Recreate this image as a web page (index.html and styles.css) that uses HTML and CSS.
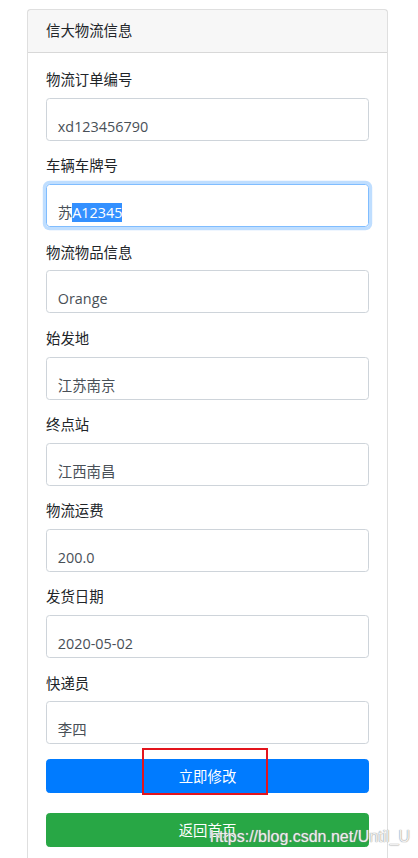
FILE: index.html
```html
<!DOCTYPE html>
<html lang="zh">
<head>
<meta charset="utf-8">
<title>信大物流信息</title>
<link rel="stylesheet" href="styles.css">
</head>
<body>
<div class="card">
  <div class="card-header">信大物流信息</div>
  <div class="card-body">
    <div class="form-group">
      <label class="label">物流订单编号</label>
      <div class="input">xd123456790</div>
    </div>
    <div class="form-group">
      <label class="label">车辆车牌号</label>
      <div class="input focused">苏<span class="sel">A12345</span></div>
    </div>
    <div class="form-group">
      <label class="label">物流物品信息</label>
      <div class="input">Orange</div>
    </div>
    <div class="form-group">
      <label class="label">始发地</label>
      <div class="input">江苏南京</div>
    </div>
    <div class="form-group">
      <label class="label">终点站</label>
      <div class="input">江西南昌</div>
    </div>
    <div class="form-group">
      <label class="label">物流运费</label>
      <div class="input">200.0</div>
    </div>
    <div class="form-group">
      <label class="label">发货日期</label>
      <div class="input">2020-05-02</div>
    </div>
    <div class="form-group">
      <label class="label">快递员</label>
      <div class="input">李四</div>
    </div>
    <div class="actions">
      <button class="btn btn-primary">立即修改</button>
      <button class="btn btn-success">返回首页</button>
      <div class="mark-box"></div>
    </div>
  </div>
</div>
<div class="watermark">https://blog.csdn.net/Until_U</div>
</body>
</html>
```
FILE: styles.css
```css
* { box-sizing: border-box; }
html, body { margin: 0; padding: 0; background: #fff; }
body {
  font-family: "Open Sans", "Noto Sans CJK SC", sans-serif;
  font-size: 14.4px;
  line-height: 1.5;
  color: #212529;
  position: relative;
  height: 858px;
  overflow: hidden;
}
.card {
  margin: 9px 0 0 27px;
  width: 361px;
  border: 1px solid rgba(0,0,0,.125);
  border-radius: 3.6px 3.6px 0 0;
  background: #fff;
}
.card-header {
  padding: 10.3px 18px;
  background: rgba(0,0,0,.03);
  border-bottom: 1px solid rgba(0,0,0,.125);
  color: #212529;
}
.card-body {
  padding: 16px 18px 40px;
}
.form-group {
  margin-bottom: 14.4px;
}
.label {
  display: block;
  margin-bottom: 7.2px;
}
.input {
  height: 43px;
  padding: 17px 10.8px 3px;
  border: 1px solid #ced4da;
  border-radius: 3.6px;
  color: #495057;
  white-space: nowrap;
}
.input.focused {
  border-color: #80bdff;
  box-shadow: 0 0 0 3.2px rgba(0,123,255,.25);
}
.sel {
  background: #3390ff;
  color: #fff;
}
.actions {
  position: relative;
  display: flex;
  flex-direction: column;
  gap: 20px;
}
.btn {
  display: block;
  width: 100%;
  height: 34px;
  border: 1px solid transparent;
  border-radius: 3.6px;
  font-family: "Open Sans", "Noto Sans CJK SC", sans-serif;
  font-size: 14.4px;
  color: #fff;
  padding: 0;
}
.btn-primary { background: #007bff; border-color: #007bff; }
.btn-success { background: #28a745; border-color: #28a745; }
.mark-box {
  position: absolute;
  left: 96px;
  top: -11px;
  width: 126px;
  height: 47px;
  border: 2px solid #e3141c;
}
.watermark {
  position: absolute;
  left: 210px;
  top: 825px;
  font-family: "Liberation Sans", Arial, sans-serif;
  font-size: 16px;
  color: rgba(255,255,255,.85);
  text-shadow: 0 0 1px #999, 0 0 1px #999;
}
```
